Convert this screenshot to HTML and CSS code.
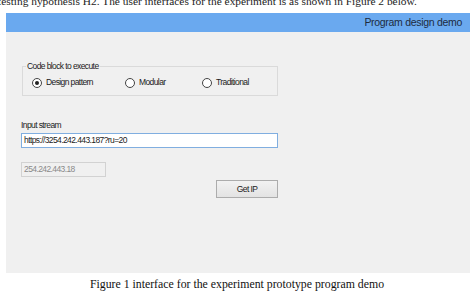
FILE: index.html
```html
<!DOCTYPE html>
<html lang="en">
<head>
  <meta charset="UTF-8" />
  <title>Program design demo</title>
  <meta name="viewport" content="width=device-width, initial-scale=1.0" />
  <link rel="stylesheet" href="styles.css">
</head>
<body>

  <p class="lead">testing hypothesis H2. The user interfaces for the experiment is as shown in Figure 2 below.</p>

  <div class="window">
    <div class="titlebar">Program design demo</div>

    <div class="form">
      <fieldset class="group">
        <legend>Code block to execute</legend>
        <div class="radios">
          <span class="radio checked"><i></i>Design pattern</span>
          <span class="radio"><i></i>Modular</span>
          <span class="radio"><i></i>Traditional</span>
        </div>
      </fieldset>

      <div class="label">Input stream</div>
      <div class="textbox">https://3254.242.443.187?ru=20</div>

      <div class="result">254.242.443.18</div>

      <div class="actions">
        <button type="button">Get IP</button>
      </div>
    </div>
  </div>

  <p class="caption">Figure 1 interface for the experiment prototype program demo</p>

</body>
</html>
```

FILE: styles.css
```css
:root {
  --title-blue: #6aa9ef;
  --panel-bg: #f0f0f0;
  --ui-font: 'Liberation Sans', Arial, sans-serif;
  --paper-font: 'Liberation Serif', 'Times New Roman', serif;
}

* {
  margin: 0;
  padding: 0;
  box-sizing: border-box;
}

html, body {
  width: 474px;
  height: 294px;
  overflow: hidden;
  background: #fff;
  color: #111;
}

.lead {
  font-family: var(--paper-font);
  font-size: 11.4px;
  line-height: 13px;
  margin: -5px 0 0 -2px;
  white-space: nowrap;
  height: 13px;
  color: #222;
}

.window {
  margin: 5px 4px 0 6px;
  height: 260px;
  background: var(--panel-bg);
  font-family: var(--ui-font);
  color: #1b1b1b;
}

.titlebar {
  height: 19px;
  background: var(--title-blue);
  text-align: right;
  padding-right: 8px;
  font-size: 10.5px;
  letter-spacing: -0.3px;
  line-height: 19px;
  color: #1d2b3e;
}

.form {
  width: 272px;
  padding: 28px 0 0 15px;
  font-size: 8.5px;
  letter-spacing: -0.6px;
  display: flex;
  flex-direction: column;
}

.group {
  border: 1px solid #dadada;
  height: 36px;
  padding: 0 0 0 3px;
  margin-left: 1px;
}

.group legend {
  padding: 0 1px;
  line-height: 12px;
}

.radios {
  display: flex;
  padding-top: 5px;
  padding-left: 6px;
}

.radio {
  display: flex;
  align-items: center;
  gap: 4px;
  line-height: 11px;
}

.radio:nth-child(1) { width: 93px; }
.radio:nth-child(2) { width: 77px; }

.radio i {
  width: 10px;
  height: 10px;
  border: 1px solid #444;
  border-radius: 50%;
  background: #fff;
  display: flex;
  align-items: center;
  justify-content: center;
}

.radio.checked i::after {
  content: "";
  width: 4px;
  height: 4px;
  border-radius: 50%;
  background: #222;
}

.label {
  margin-top: 24px;
  line-height: 10px;
}

.textbox {
  margin-top: 3px;
  height: 15px;
  border: 1px solid #80aee0;
  background: #fff;
  padding-left: 2px;
  line-height: 13px;
}

.result {
  margin-top: 14px;
  width: 85px;
  height: 15px;
  border: 1px solid #d2d2d2;
  color: #8a8a8a;
  padding-left: 2px;
  line-height: 13px;
}

.actions {
  display: flex;
  justify-content: flex-end;
  margin-top: 3px;
}

.actions button {
  width: 62px;
  height: 18px;
  border: 1px solid #acacac;
  background: linear-gradient(#f2f2f2, #e3e3e3);
  font-family: var(--ui-font);
  font-size: 8.5px;
  letter-spacing: -0.6px;
  color: #1b1b1b;
}

.caption {
  font-family: var(--paper-font);
  font-size: 11.8px;
  line-height: 14px;
  text-align: center;
  margin-top: 4px;
  color: #111;
}
```
